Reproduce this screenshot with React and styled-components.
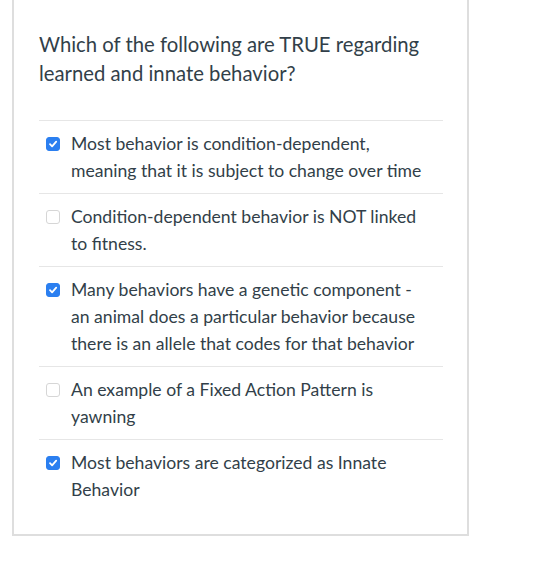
import React from "react";
import styled, { createGlobalStyle } from "styled-components";

const Global = createGlobalStyle`
  html, body { margin: 0; padding: 0; background: #fff; }
  body { font-family: Lato, "Open Sans", sans-serif; overflow: hidden; }
`;

const Page = styled.div`
  width: 552px;
  height: 562px;
  background: #fff;
`;

const Card = styled.div`
  box-sizing: border-box;
  width: 457px;
  margin: -2px 0 0 12px;
  border: 2px solid #dedede;
  background: #fff;
  padding: 30px 24px 22px 25px;
`;

const Question = styled.div`
  font-size: 20.3px;
  line-height: 29px;
  color: #323f49;
  margin-bottom: 32px;
`;

const List = styled.div`
  display: flex;
  flex-direction: column;
`;

const Row = styled.div`
  display: flex;
  align-items: flex-start;
  gap: 11px;
  padding: 9px 0 9px 7px;
  border-top: 1px solid #e6e6e6;
`;

const Box = styled.span`
  flex: none;
  box-sizing: border-box;
  width: 14px;
  height: 14px;
  margin-top: 7px;
  border-radius: 3px;
  display: flex;
  align-items: center;
  justify-content: center;
  background: ${(p) => (p.$checked ? "#2b7ff0" : "#fff")};
  border: 1px solid ${(p) => (p.$checked ? "#2b7ff0" : "#d6d6d6")};
`;

const Label = styled.span`
  font-size: 17.6px;
  line-height: 27px;
  color: #323f49;
`;

const options = [
  { text: ["Most behavior is condition-dependent,", "meaning that it is subject to change over time"], checked: true },
  { text: ["Condition-dependent behavior is NOT linked", "to fitness."], checked: false },
  {
    text: [
      "Many behaviors have a genetic component -",
      "an animal does a particular behavior because",
      "there is an allele that codes for that behavior",
    ],
    checked: true,
  },
  { text: ["An example of a Fixed Action Pattern is", "yawning"], checked: false },
  { text: ["Most behaviors are categorized as Innate", "Behavior"], checked: true },
];

function Check({ checked }) {
  return (
    <Box $checked={checked}>
      {checked && (
        <svg width="10" height="10" viewBox="0 0 10 10">
          <path d="M2 5.2 L4.1 7.3 L8.2 2.6" fill="none" stroke="#fff" strokeWidth="1.8" strokeLinecap="round" strokeLinejoin="round" />
        </svg>
      )}
    </Box>
  );
}

export default function App() {
  return (
    <Page>
      <Global />
      <Card>
        <Question>
          Which of the following are TRUE regarding
          <br />
          learned and innate behavior?
        </Question>
        <List>
          {options.map((o, i) => (
            <Row key={i}>
              <Check checked={o.checked} />
              <Label>
                {o.text.map((t, j) => (
                  <React.Fragment key={j}>
                    {j > 0 && <br />}
                    {t}
                  </React.Fragment>
                ))}
              </Label>
            </Row>
          ))}
        </List>
      </Card>
    </Page>
  );
}
